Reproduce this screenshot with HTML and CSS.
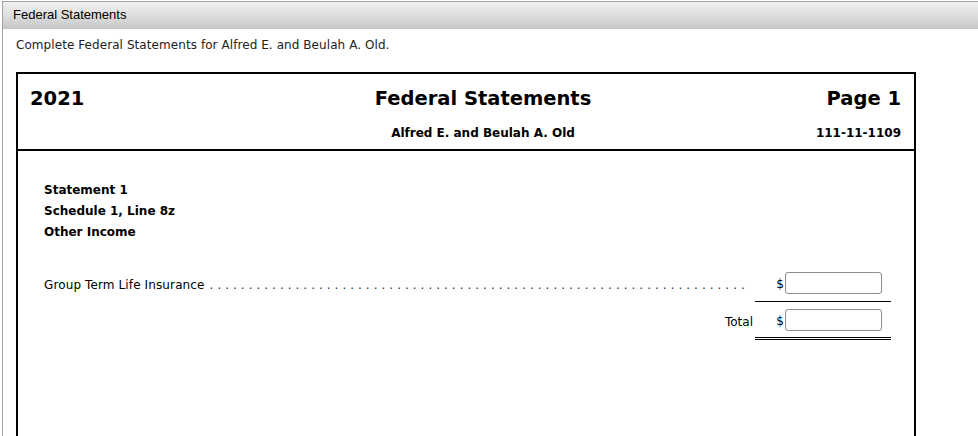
FILE: index.html
```html
<!DOCTYPE html>
<html>
<head>
<meta charset="utf-8">
<title>Federal Statements</title>
<link rel="stylesheet" href="styles.css">
</head>
<body>
<div class="panel">
  <div class="titlebar">Federal Statements</div>
  <div class="content">
    <p class="desc">Complete Federal Statements for Alfred E. and Beulah A. Old.</p>
    <div class="sheet">
      <div class="sheet-head">
        <div class="h-left big">2021</div>
        <div class="h-center big">Federal Statements</div>
        <div class="h-right big">Page 1</div>
        <div class="h-left small"></div>
        <div class="h-center small">Alfred E. and Beulah A. Old</div>
        <div class="h-right small">111-11-1109</div>
      </div>
      <div class="sheet-body">
        <div class="stmt-title">
          <div>Statement 1</div>
          <div>Schedule 1, Line 8z</div>
          <div>Other Income</div>
        </div>
        <div class="line-row">
          <div class="line-label leader"><span class="label-text">Group Term Life Insurance</span><span class="dots">.....................................................................................................</span></div>
          <div class="amount single"><span class="cur">$</span><input class="amt-input" type="text"></div>
        </div>
        <div class="line-row total-row">
          <div class="line-label total">Total</div>
          <div class="amount double"><span class="cur">$</span><input class="amt-input" type="text"></div>
        </div>
      </div>
    </div>
  </div>
</div>
</body>
</html>
```
FILE: styles.css
```css
html, body {
  margin: 0;
  padding: 0;
  background: #fff;
}
body {
  overflow: hidden;
  height: 436px;
}
.panel {
  margin: 1px 0 0 2px;
  border-top: 1px solid #a0a0a0;
  border-left: 1px solid #a0a0a0;
  height: 500px;
}
.titlebar {
  height: 26px;
  line-height: 26px;
  padding-left: 10px;
  font-family: "Liberation Sans", Arial, sans-serif;
  font-size: 13px;
  color: #000;
  background: linear-gradient(#f2f2f2, #c9c9c9);
  border-bottom: 1px solid #c4c4c4;
}
.content {
  padding: 0 13px;
}
.desc {
  margin: 8px 0 19px;
  font-family: "DejaVu Sans", Verdana, sans-serif;
  font-size: 12px;
  line-height: 16px;
  letter-spacing: 0.07px;
  color: #222;
}
.sheet {
  width: 900px;
  box-sizing: border-box;
  border: 2px solid #000;
  height: 420px;
  font-family: "DejaVu Sans", Verdana, sans-serif;
  color: #000;
}
.sheet-head {
  display: grid;
  grid-template-columns: 303px 300px 1fr;
  padding: 13px 13px 8px 12px;
  border-bottom: 2px solid #000;
  row-gap: 14px;
}
.big {
  font-size: 19.5px;
  font-weight: bold;
  line-height: 24px;
}
.small {
  font-size: 12px;
  font-weight: bold;
  line-height: 16px;
}
.h-center { text-align: center; }
.h-right { text-align: right; }
.sheet-body {
  padding: 29px 23px 0 26px;
}
.stmt-title {
  font-size: 12px;
  font-weight: bold;
  line-height: 21px;
  margin-bottom: 29px;
}
.line-row {
  display: flex;
  font-size: 12px;
}
.line-label {
  flex: 1;
  min-width: 0;
  line-height: 22px;
  padding-top: 2px;
  letter-spacing: 0.12px;
}
.leader {
  display: flex;
  white-space: nowrap;
  overflow: hidden;
  margin-right: 9px;
}
.label-text {
  flex: none;
  padding-right: 5px;
}
.dots {
  flex: 1;
  min-width: 0;
  overflow: hidden;
  letter-spacing: 4px;
  color: #333;
}
.total {
  text-align: right;
  padding-right: 2px;
  padding-top: 9px;
  letter-spacing: 0;
}
.amount {
  width: 136px;
  box-sizing: border-box;
  display: flex;
  justify-content: flex-end;
  align-items: flex-start;
  padding: 0 9px 6px 0;
  font-size: 12px;
}
.single {
  border-bottom: 1px solid #000;
}
.double {
  padding-top: 7px;
  padding-bottom: 5px;
  border-bottom: 3px double #000;
}
.cur {
  line-height: 22px;
  padding-top: 1px;
  margin-right: 1px;
}
.amt-input {
  width: 97px;
  height: 22px;
  box-sizing: border-box;
  margin: 0;
  border: 1px solid #8f8f8f;
  border-radius: 3px;
  box-shadow: inset 0 0 1px rgba(0,0,0,0.15);
  background: #fff;
  padding: 0 3px;
  font-family: "DejaVu Sans", Verdana, sans-serif;
  font-size: 12px;
}
```
